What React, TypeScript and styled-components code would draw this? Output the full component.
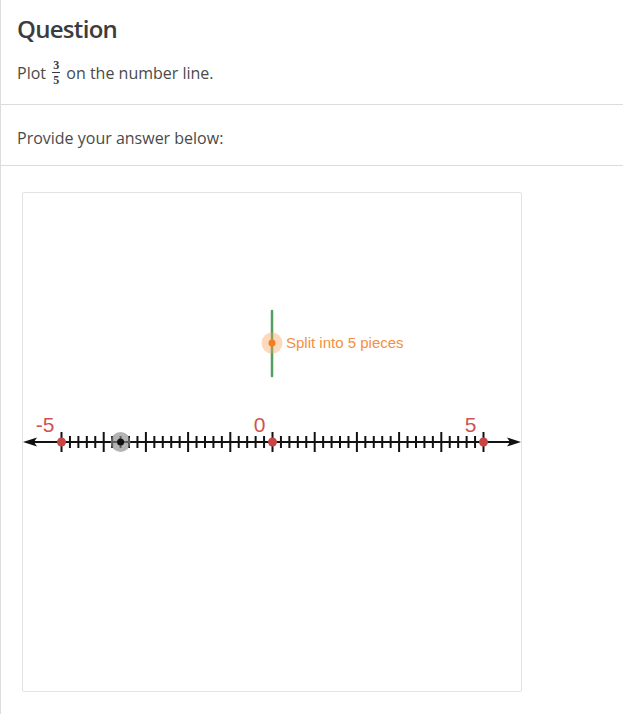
import styled, { createGlobalStyle } from "styled-components";

const GlobalStyle = createGlobalStyle`
  html, body {
    margin: 0;
    padding: 0;
    background: #fff;
  }
  body {
    font-family: "Open Sans", "Noto Sans", sans-serif;
  }
`;

const Page = styled.div`
  min-height: 100vh;
  border-left: 1px solid #dcdcdc;
  box-sizing: border-box;
`;

const Section = styled.section<{ pt: number; pb: number }>`
  padding: ${p => p.pt}px 16px ${p => p.pb}px;
  border-bottom: 1px solid #dcdcdc;
`;

const Title = styled.h1`
  margin: 0;
  font-size: 24px;
  line-height: 29px;
  font-weight: 600;
  color: #3c3c3c;
  letter-spacing: -0.7px;
`;

const Prompt = styled.p<{ mt?: number }>`
  margin: ${p => p.mt ?? 0}px 0 0;
  font-size: 16px;
  line-height: 24px;
  color: #4a4a4a;
`;

const Frac = styled.span`
  display: inline-flex;
  flex-direction: column;
  align-items: center;
  vertical-align: middle;
  margin: 0 2px;
  font-family: "Liberation Serif", "DejaVu Serif", serif;
  font-weight: 700;
  font-size: 12px;
  line-height: 11px;
  color: #3a3a3a;
  position: relative;
  top: -2px;
`;

const Num = styled.span`
  padding: 0 1px 1px;
  border-bottom: 1px solid #3a3a3a;
`;

const Den = styled.span`
  padding-top: 2px;
`;

const GraphArea = styled.div`
  padding: 26px 21px 20px;
`;

const GraphBox = styled.div`
  width: 500px;
  height: 500px;
  box-sizing: border-box;
  border: 1px solid #e3e3e3;
  border-radius: 2px;
  background: #fff;
`;

const UNIT = 42.2;
const ZERO = 249.5;
const AXIS_Y = 249;
const SPLIT_Y = 150;
const xOf = (v: number) => ZERO + v * UNIT;

const NumberLine = () => {
  const ticks: JSX.Element[] = [];
  for (let i = -25; i <= 25; i++) {
    const major = i % 5 === 0;
    const h = major ? 10 : 6;
    const x = xOf(i / 5);
    ticks.push(
      <line
        key={i}
        x1={x}
        x2={x}
        y1={AXIS_Y - h}
        y2={AXIS_Y + h}
        stroke="#111"
        strokeWidth={2}
      />
    );
  }
  const labels = [-5, 0, 5];
  return (
    <svg width={498} height={498} viewBox="0 0 498 498">
      {/* axis */}
      <line x1={8} x2={490} y1={AXIS_Y} y2={AXIS_Y} stroke="#111" strokeWidth={2} />
      <polygon points={`0,${AXIS_Y} 14,${AXIS_Y - 4.5} 11,${AXIS_Y} 14,${AXIS_Y + 4.5}`} fill="#111" />
      <polygon points={`498,${AXIS_Y} 484,${AXIS_Y - 4.5} 487,${AXIS_Y} 484,${AXIS_Y + 4.5}`} fill="#111" />
      {ticks}
      {labels.map(v => (
        <text
          key={v}
          x={xOf(v) - 7}
          y={AXIS_Y - 10}
          textAnchor="end"
          fontFamily="'Liberation Sans', Arial, sans-serif"
          fontSize={21}
          fill="#cf5350"
        >
          {v}
        </text>
      ))}
      {labels.map(v => (
        <circle key={`p${v}`} cx={xOf(v)} cy={AXIS_Y} r={4.5} fill="#c94444" />
      ))}

      {/* draggable answer point */}
      <circle cx={xOf(-3.6)} cy={AXIS_Y} r={10} fill="#8a8a8a" fillOpacity={0.65} />
      <circle cx={xOf(-3.6)} cy={AXIS_Y} r={3.5} fill="#111" />

      {/* split control */}
      <line x1={249} x2={249} y1={SPLIT_Y - 32} y2={SPLIT_Y + 33} stroke="#559d5c" strokeWidth={2.5} strokeLinecap="round" />
      <circle cx={249} cy={SPLIT_Y} r={10.5} fill="#f7a05a" fillOpacity={0.4} />
      <circle cx={249} cy={SPLIT_Y} r={3.5} fill="#f57d1f" />
      <text
        x={263}
        y={SPLIT_Y + 5}
        fontFamily="'Liberation Sans', Arial, sans-serif"
        fontSize={15}
        fill="#f4903c"
      >
        Split into 5 pieces
      </text>
    </svg>
  );
};

export default function App() {
  return (
    <>
      <GlobalStyle />
      <Page>
        <Section pt={14} pb={16}>
          <Title>Question</Title>
          <Prompt mt={18}>
            Plot{" "}
            <Frac>
              <Num>3</Num>
              <Den>5</Den>
            </Frac>{" "}
            on the number line.
          </Prompt>
        </Section>
        <Section pt={21} pb={15}>
          <Prompt>Provide your answer below:</Prompt>
        </Section>
        <GraphArea>
          <GraphBox>
            <NumberLine />
          </GraphBox>
        </GraphArea>
      </Page>
    </>
  );
}
